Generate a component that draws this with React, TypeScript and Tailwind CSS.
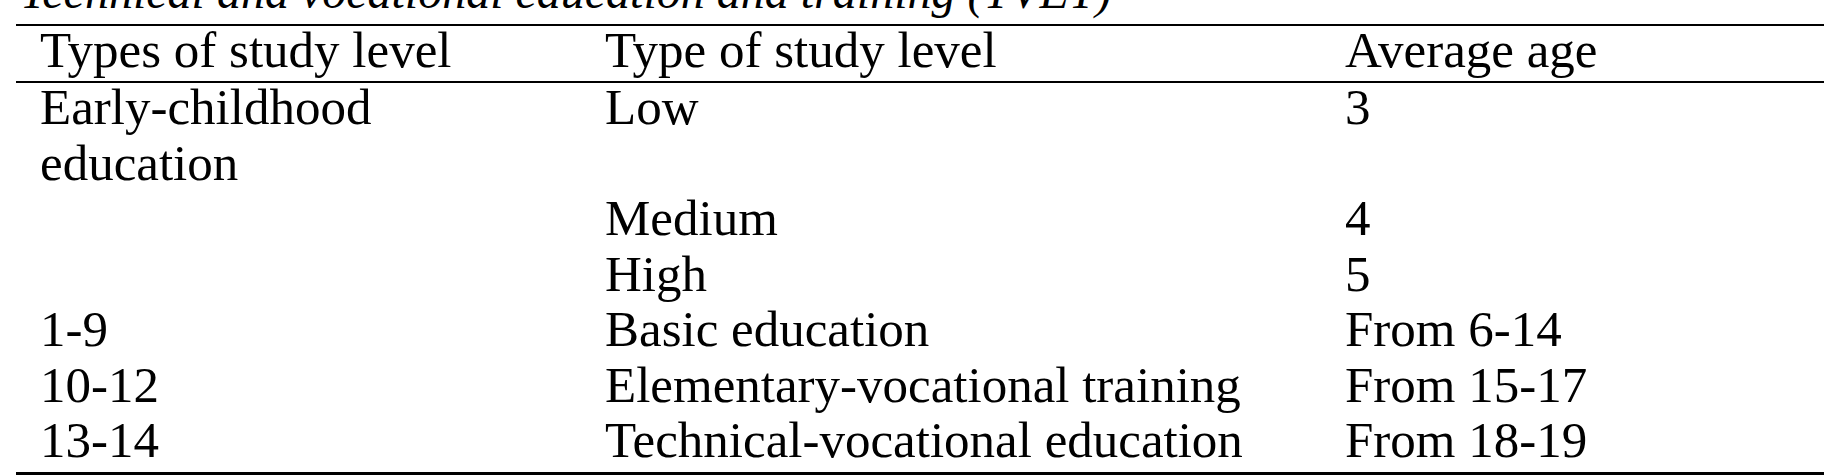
export default function App() {
  const rows = [
    { a: "Early-childhood education", b: "Low", c: "3" },
    { a: "", b: "Medium", c: "4" },
    { a: "", b: "High", c: "5" },
    { a: "1-9", b: "Basic education", c: "From 6-14" },
    { a: "10-12", b: "Elementary-vocational training", c: "From 15-17" },
    { a: "13-14", b: "Technical-vocational education", c: "From 18-19" },
  ];

  return (
    <div className="w-[1826px] h-[476px] overflow-hidden bg-white text-black font-['Liberation_Serif',serif] text-[51px]">
      {/* caption, cut off by the top edge */}
      <div className="-mt-[33px] h-[50px] leading-[50px] text-[48px] italic pl-[20px] whitespace-nowrap">
        Technical and vocational education and training (TVET)
      </div>
      <div className="mt-[7px] ml-[16px] w-[1808px]">
        <div className="grid grid-cols-[589px_740px_1fr] leading-[48px] border-t-2 border-b-2 border-black pb-[7px]">
          <div className="pl-[24px]">Types of study level</div>
          <div>Type of study level</div>
          <div>Average age</div>
        </div>
        <div className="border-b-[3px] border-black pb-[3px]">
          <div className="-mt-[3px] leading-[55.5px]">
            {rows.map((r, i) => (
              <div key={i} className="grid grid-cols-[589px_740px_1fr]">
                <div className="pl-[24px] pr-[100px]">{r.a}</div>
                <div>{r.b}</div>
                <div>{r.c}</div>
              </div>
            ))}
          </div>
        </div>
      </div>
    </div>
  );
}
